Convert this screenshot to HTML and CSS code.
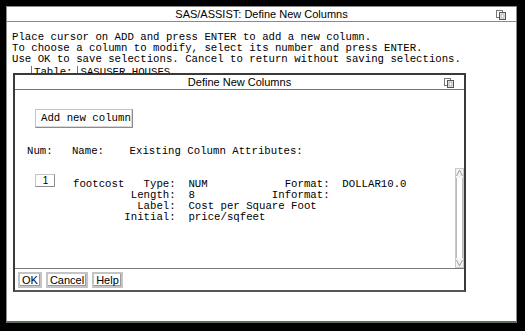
FILE: index.html
```html
<!DOCTYPE html>
<html lang="en">
<head>
    <meta charset="UTF-8">
    <title>SAS/ASSIST: Define New Columns</title>
    <link rel="stylesheet" href="styles.css">
</head>
<body>
    <div class="window">
        <div class="titlebar">
            <span></span>
            <span class="title">SAS/ASSIST: Define New Columns</span>
            <svg class="win-icon" width="10" height="10" viewBox="0 0 10 10">
                <rect x="0.5" y="0.5" width="6" height="7" fill="#fff" stroke="#777"/>
                <rect x="3.5" y="2.5" width="6" height="7" fill="#fff" stroke="#555"/>
                <rect x="5" y="4" width="3" height="4" fill="none" stroke="#aaa"/>
            </svg>
        </div>

        <div class="instructions">
            <div class="line">Place cursor on ADD and press ENTER to add a new column.</div>
            <div class="line">To choose a column to modify, select its number and press ENTER.</div>
            <div class="line">Use OK to save selections. Cancel to return without saving selections.</div>
        </div>

        <div class="table-line"><span class="field-label">Table:</span><span class="field-value">SASUSER.HOUSES</span></div>

        <div class="dialog">
            <div class="titlebar dialog-title">
                <span></span>
                <span class="title">Define New Columns</span>
                <svg class="win-icon" width="10" height="10" viewBox="0 0 10 10">
                    <rect x="0.5" y="0.5" width="6" height="7" fill="#fff" stroke="#777"/>
                    <rect x="3.5" y="2.5" width="6" height="7" fill="#fff" stroke="#555"/>
                    <rect x="5" y="4" width="3" height="4" fill="none" stroke="#aaa"/>
                </svg>
            </div>

            <div class="dialog-body">
                <div class="add-row">
                    <span class="add-btn">Add new column</span>
                </div>

                <div class="col-header">Num:   Name:    Existing Column Attributes:</div>

                <div class="list">
                    <div class="list-rows">
                        <div class="col-row">
                            <span class="num-box">1</span>
                            <div class="attrs">footcost   Type:  NUM            Format:  DOLLAR10.0
         Length:  8            Informat:
          Label:  Cost per Square Foot
        Initial:  price/sqfeet</div>
                        </div>
                    </div>
                    <div class="scrollbar">
                        <svg class="arrow" width="7" height="8" viewBox="0 0 7 8">
                            <path d="M0.5 7 L3.5 1 L6.5 7" fill="none" stroke="#9a9a9a"/>
                        </svg>
                        <div class="track"></div>
                        <svg class="arrow" width="7" height="8" viewBox="0 0 7 8">
                            <path d="M0.5 1 L3.5 7 L6.5 1" fill="none" stroke="#9a9a9a"/>
                        </svg>
                    </div>
                </div>

                <div class="buttons">
                    <span class="btn">OK</span>
                    <span class="btn">Cancel</span>
                    <span class="btn">Help</span>
                </div>
            </div>
        </div>
    </div>
</body>
</html>
```

FILE: styles.css
```css
body {
    margin: 0;
    padding: 6px;
    background-color: #000;
    font-family: "Liberation Mono", "DejaVu Sans Mono", monospace;
    font-size: 10.7px;
    color: #000;
}
.window {
    box-sizing: border-box;
    width: 511px;
    height: 317px;
    overflow: hidden;
    background: #fff;
    border: 1px solid #8a8a8a;
    border-bottom: 2px solid #5c6c5c;
}
.titlebar {
    display: grid;
    grid-template-columns: 1fr auto 1fr;
    align-items: center;
    height: 14px;
    border-bottom: 1px solid #8a8a8a;
    font-family: "Liberation Sans", Arial, sans-serif;
    font-size: 11px;
    line-height: 14px;
}
.win-icon {
    justify-self: end;
    margin-right: 10px;
    margin-top: 1px;
}
.instructions {
    padding: 10px 0 0 5px;
}
.line {
    height: 11px;
    line-height: 11px;
    white-space: nowrap;
}
.table-line {
    height: 6px;
    padding-top: 2px;
    overflow: hidden;
    padding-left: 24px;
    line-height: 11px;
    white-space: nowrap;
}
.field-label {
    border-left: 1px solid #777;
    padding-left: 2px;
}
.field-value {
    border-left: 1px solid #777;
    padding-left: 2px;
    margin-left: 5px;
}
.dialog {
    box-sizing: border-box;
    width: 453px;
    margin-left: 6px;
    border: 2px solid #3a3a3a;
    border-bottom-color: #555;
}
.dialog-title {
    border-bottom-color: #777;
}
.add-row {
    padding: 19px 0 0 20px;
    height: 19px;
}
.add-btn {
    display: inline-block;
    box-sizing: border-box;
    width: 98px;
    height: 19px;
    padding-left: 5px;
    line-height: 17px;
    border: 1px solid #c4c4c4;
    border-right-color: #8c8c8c;
    border-bottom-color: #8c8c8c;
    box-shadow: inset -1px -1px 0 #d8d8d8;
}
.col-header {
    margin-top: 18px;
    padding-left: 12px;
    line-height: 11px;
    white-space: pre;
}
.list {
    display: flex;
    height: 101px;
    margin-top: 10px;
}
.list-rows {
    flex: 1;
    padding: 7px 0 0 20px;
}
.col-row {
    display: flex;
    align-items: flex-start;
}
.num-box {
    box-sizing: border-box;
    width: 20px;
    height: 13px;
    margin-right: 18px;
    padding-left: 1px;
    border: 1px solid #c4c4c4;
    border-right-color: #8c8c8c;
    border-bottom-color: #8c8c8c;
    font-family: "Liberation Sans", Arial, sans-serif;
    font-size: 10px;
    line-height: 11px;
    text-align: center;
}
.attrs {
    padding-top: 5px;
    line-height: 11px;
    white-space: pre;
}
.scrollbar {
    display: flex;
    flex-direction: column;
    box-sizing: border-box;
    width: 9px;
    margin-top: 1px;
    border: 1px solid #c8c8c8;
    background: #f4f4f4;
}
.arrow {
    display: block;
    width: 7px;
    height: 8px;
}
.track {
    flex: 1;
    margin: 1px 0;
    border-left: 1px solid #bbb;
    border-right: 1px solid #bbb;
    background: #fff;
}
.buttons {
    display: flex;
    gap: 4px;
    padding: 3px 0 2px 3px;
    border-top: 1px solid #7a7a7a;
}
.btn {
    box-sizing: border-box;
    height: 16px;
    padding: 0 2px;
    border: 2px solid #c4c4c4;
    box-shadow: inset -1px -1px 0 #9a9a9a;
    background: #fff;
    font-family: "Liberation Sans", Arial, sans-serif;
    font-size: 11px;
    line-height: 12px;
}
```
